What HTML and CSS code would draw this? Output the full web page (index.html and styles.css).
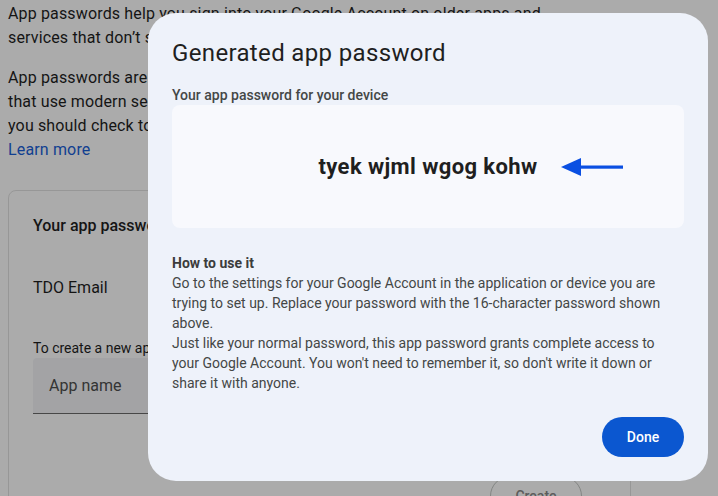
FILE: index.html
```html
<!DOCTYPE html>
<html lang="en">
<head>
<meta charset="utf-8">
<title>App passwords</title>
<link rel="stylesheet" href="styles.css">
</head>
<body>
<main class="page">
  <p class="intro">App passwords help you sign into your Google Account on older apps and<br>services that don’t support modern security standards.</p>
  <p class="intro">App passwords are less secure than using up-to-date apps and services<br>that use modern security standards. Before you create an app password,<br>you should check to see if your app needs this in order to sign in.<br><a class="link" href="#">Learn more</a></p>

  <section class="card">
    <h2 class="card-title">Your app passwords</h2>
    <div class="app-row">TDO Email</div>
    <div class="create-form">
      <p class="hint">To create a new app specific password, type a name for it below...</p>
      <div class="field"><span class="placeholder">App name</span></div>
      <div class="form-actions"><button class="btn-outline">Create</button></div>
    </div>
  </section>
</main>

<div class="scrim"></div>

<div class="dialog" role="dialog">
  <h1 class="dialog-title">Generated app password</h1>
  <div class="label">Your app password for your device</div>
  <div class="pw-box">
    <span class="pw">tyek wjml wgog kohw</span>
    <svg class="arrow" width="62" height="20" viewBox="0 0 62 20">
      <polygon points="0,10 20,1 20,19" fill="#0a4fe2"/>
      <rect x="18" y="8.5" width="44" height="3.2" fill="#0a4fe2"/>
    </svg>
  </div>
  <div class="howto">
    <div class="howto-title">How to use it</div>
    <p class="howto-text">Go to the settings for your Google Account in the application or device you are trying to set up. Replace your password with the 16-character password shown above.<br>Just like your normal password, this app password grants complete access to your Google Account. You won't need to remember it, so don't write it down or share it with anyone.</p>
  </div>
  <div class="dialog-actions"><button class="btn-done">Done</button></div>
</div>
</body>
</html>
```

FILE: styles.css
```css
html, body {
  margin: 0;
  padding: 0;
  height: 100%;
  overflow: hidden;
  background: #ffffff;
  font-family: Roboto, "Liberation Sans", Arial, sans-serif;
  color: #1f1f1f;
}

.page {
  padding: 2px 8px 0 8px;
}

.intro {
  margin: 0 0 16px 0;
  font-size: 16px;
  line-height: 24px;
  color: #1f1f1f;
  letter-spacing: 0.15px;
}

.link {
  color: #1a5fd8;
  text-decoration: none;
}

.card {
  margin-top: 28px;
  width: 623px;
  height: 400px;
  box-sizing: border-box;
  border: 1px solid #e2e2e2;
  border-radius: 8px;
  padding: 23px 24px 0 24px;
}

.card-title {
  margin: 0;
  font-size: 16px;
  line-height: 24px;
  font-weight: 500;
  color: #1f1f1f;
}

.app-row {
  margin-top: 38px;
  font-size: 16px;
  line-height: 24px;
  color: #1f1f1f;
}

.create-form {
  margin-top: 38px;
  width: 549px;
}

.hint {
  margin: 0;
  font-size: 14px;
  line-height: 20px;
  color: #1f1f1f;
}

.field {
  height: 56px;
  box-sizing: border-box;
  background: #f3f4f6;
  border-bottom: 1px solid #6a6a6a;
  border-radius: 4px 4px 0 0;
  display: flex;
  align-items: center;
  padding-left: 16px;
}

.placeholder {
  font-size: 16px;
  color: #4e4e4e;
}

.form-actions {
  display: flex;
  justify-content: flex-end;
  margin-top: 62px;
}

.btn-outline {
  width: 92px;
  height: 40px;
  border: 1px solid #c4c7c5;
  border-radius: 20px;
  background: transparent;
  font-family: inherit;
  font-size: 14px;
  font-weight: 500;
  color: #8a8a8a;
}

.scrim {
  position: fixed;
  inset: 0;
  background: rgba(0, 0, 0, 0.33);
}

.dialog {
  position: fixed;
  left: 148px;
  top: 13px;
  width: 560px;
  height: 468px;
  box-sizing: border-box;
  padding: 24px;
  background: #eef2fa;
  border-radius: 28px;
  display: flex;
  flex-direction: column;
}

.dialog-title {
  margin: 0;
  font-size: 24px;
  line-height: 32px;
  font-weight: 400;
  color: #1f1f1f;
  letter-spacing: 0.35px;
}

.label {
  margin-top: 16px;
  font-size: 14px;
  line-height: 20px;
  font-weight: 500;
  color: #444746;
}

.pw-box {
  position: relative;
  height: 123px;
  background: #f8f9fd;
  border-radius: 8px;
  display: flex;
  align-items: center;
  justify-content: center;
}

.pw {
  font-size: 22px;
  font-weight: 700;
  color: #1f1f1f;
  letter-spacing: 0.4px;
}

.arrow {
  position: absolute;
  left: 389px;
  top: 52px;
}

.howto {
  margin-top: 25px;
}

.howto-title {
  font-size: 14px;
  line-height: 20px;
  font-weight: 700;
  color: #3c3c3c;
}

.howto-text {
  margin: 0;
  font-size: 14px;
  line-height: 20px;
  color: #444746;
}

.dialog-actions {
  margin-top: auto;
  display: flex;
  justify-content: flex-end;
}

.btn-done {
  width: 82px;
  height: 40px;
  border: none;
  border-radius: 20px;
  background: #0b57d0;
  color: #ffffff;
  font-family: inherit;
  font-size: 14px;
  font-weight: 500;
}
```
